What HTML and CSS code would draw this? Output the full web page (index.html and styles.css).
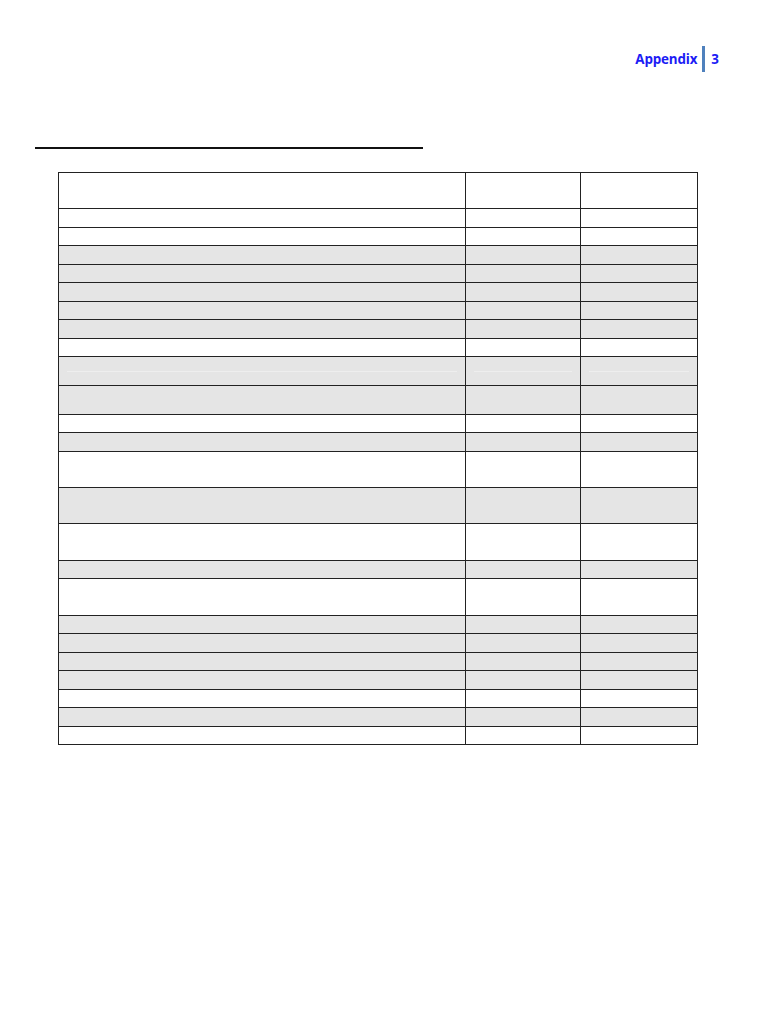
FILE: index.html
```html
<!DOCTYPE html>
<html lang="en">
<head>
<meta charset="utf-8">
<title>Appendix 3</title>
<link rel="stylesheet" href="styles.css">
</head>
<body>
<div class="page">
  <header class="running-head">
    <span class="head-title">Appendix</span>
    <span class="head-bar"></span>
    <span class="head-num">3</span>
  </header>
  <div class="rule"></div>
  <table class="grid">
    <colgroup>
      <col class="c1"><col class="c2"><col class="c3">
    </colgroup>
    <tbody>
      <tr class="t"><td></td><td></td><td></td></tr>
      <tr class="s"><td></td><td></td><td></td></tr>
      <tr class="s"><td></td><td></td><td></td></tr>
      <tr class="s g"><td></td><td></td><td></td></tr>
      <tr class="s g"><td></td><td></td><td></td></tr>
      <tr class="s g"><td></td><td></td><td></td></tr>
      <tr class="s g"><td></td><td></td><td></td></tr>
      <tr class="s g"><td></td><td></td><td></td></tr>
      <tr class="s"><td></td><td></td><td></td></tr>
      <tr class="d g ln"><td><div class="faint"></div></td><td><div class="faint"></div></td><td><div class="faint"></div></td></tr>
      <tr class="d g"><td></td><td></td><td></td></tr>
      <tr class="s"><td></td><td></td><td></td></tr>
      <tr class="s g"><td></td><td></td><td></td></tr>
      <tr class="t"><td></td><td></td><td></td></tr>
      <tr class="t g"><td></td><td></td><td></td></tr>
      <tr class="t"><td></td><td></td><td></td></tr>
      <tr class="s g"><td></td><td></td><td></td></tr>
      <tr class="t"><td></td><td></td><td></td></tr>
      <tr class="s g"><td></td><td></td><td></td></tr>
      <tr class="s g"><td></td><td></td><td></td></tr>
      <tr class="s g"><td></td><td></td><td></td></tr>
      <tr class="s g"><td></td><td></td><td></td></tr>
      <tr class="s"><td></td><td></td><td></td></tr>
      <tr class="s g"><td></td><td></td><td></td></tr>
      <tr class="s"><td></td><td></td><td></td></tr>
    </tbody>
  </table>
</div>
</body>
</html>
```
FILE: styles.css
```css
html, body {
  margin: 0;
  padding: 0;
  background: #ffffff;
}
body {
  font-family: "Open Sans", "Liberation Sans", sans-serif;
}
.page {
  width: 768px;
  height: 1024px;
  padding-top: 45px;
  box-sizing: border-box;
}
.running-head {
  display: flex;
  justify-content: flex-end;
  align-items: center;
  padding-right: 49px;
  height: 27px;
}
.head-title {
  color: #1c1cf5;
  font-weight: 700;
  font-size: 13.4px;
  letter-spacing: -0.15px;
}
.head-bar {
  width: 3px;
  height: 26px;
  background: #4f81bd;
  margin: 0 6px 0 5px;
}
.head-num {
  color: #1c1cf5;
  font-weight: 700;
  font-size: 13.4px;
}
.rule {
  margin: 75px 0 0 35px;
  width: 388px;
  height: 2px;
  background: #111;
}
.grid {
  margin: 23px 0 0 58px;
  border-collapse: collapse;
  table-layout: fixed;
  width: 640px;
}
.grid .c1 { width: 407px; }
.grid .c2 { width: 115px; }
.grid .c3 { width: 117px; }
.grid td {
  border: 1px solid #222;
  padding: 0;
  vertical-align: middle;
}
.grid tr.s td { height: 17.5px; }
.grid tr.d td { height: 27.8px; }
.grid tr.t td { height: 35.3px; }
.grid tr.g td { background: #e5e5e5; }
.faint {
  margin: 0 8px;
  height: 0;
  border-top: 1px solid #eeeeee;
}
```
